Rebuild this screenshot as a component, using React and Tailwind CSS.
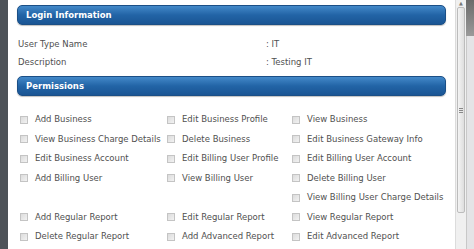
import React from 'react';

const permissions = [
  ['Add Business', 'Edit Business Profile', 'View Business'],
  ['View Business Charge Details', 'Delete Business', 'Edit Business Gateway Info'],
  ['Edit Business Account', 'Edit Billing User Profile', 'Edit Billing User Account'],
  ['Add Billing User', 'View Billing User', 'Delete Billing User'],
  [null, null, 'View Billing User Charge Details'],
  ['Add Regular Report', 'Edit Regular Report', 'View Regular Report'],
  ['Delete Regular Report', 'Add Advanced Report', 'Edit Advanced Report'],
];

const SectionBar = ({ title }) => (
  <div className="h-[20px] rounded-[5px] border border-[#1b4f86] bg-gradient-to-b from-[#4389c9] via-[#2264a6] to-[#1a5594] flex items-center pl-[8px] shadow-[0_1px_1px_rgba(0,0,0,0.25)]">
    <span className="text-white font-bold text-[8.5px]">{title}</span>
  </div>
);

const Check = ({ label }) => (
  <label className="flex items-center h-[19.5px] gap-[7px]">
    <span className="w-[8px] h-[8px] border border-[#c4c4c4] bg-gradient-to-br from-[#dcdcdc] to-[#f2f2f2] shrink-0" />
    <span>{label}</span>
  </label>
);

export default function App() {
  return (
    <div className="flex w-[474px] h-[249px] overflow-hidden bg-white text-[#505050] text-[8.5px]" style={{ fontFamily: '"DejaVu Sans", Verdana, sans-serif' }}>
      <div className="w-[8px] bg-[#4d5258]" />

      <div className="flex-1 pl-[9px] pr-[9px] pt-[5px]">
        <SectionBar title="Login Information" />

        <div className="mt-[10px] pl-[1px]">
          <div className="flex h-[18px] items-center">
            <span className="w-[248px]">User Type Name</span>
            <span>: IT</span>
          </div>
          <div className="flex h-[18px] items-center">
            <span className="w-[248px]">Description</span>
            <span>: Testing IT</span>
          </div>
        </div>

        <div className="mt-[5px]">
          <SectionBar title="Permissions" />
        </div>

        <div className="mt-[14px] grid grid-cols-[147px_125px_1fr] pl-[3px]">
          {permissions.flatMap((row, i) =>
            row.map((p, j) => (p ? <Check key={`${i}-${j}`} label={p} /> : <div key={`${i}-${j}`} className="h-[19.5px]" />))
          )}
        </div>
      </div>

      {/* scrollbar */}
      <div className="w-[11px] bg-[#f0f0f0] border-l border-[#dcdcdc] flex flex-col items-center">
        <div className="h-[6px] w-full flex items-center justify-center text-[#777] text-[5px] leading-none">▲</div>
        <div className="mt-[1px] w-[8px] h-[206px] rounded-[2px] border border-[#bcbcbc] bg-gradient-to-r from-[#f4f4f4] to-[#dedede] flex items-center justify-center">
          <div className="flex flex-col gap-[1px]">
            <div className="w-[4px] h-px bg-[#888]" />
            <div className="w-[4px] h-px bg-[#888]" />
            <div className="w-[4px] h-px bg-[#888]" />
          </div>
        </div>
      </div>

      <div className="w-[8px] flex flex-col">
        <div className="h-[36px] bg-gradient-to-b from-[#6b6b6b] to-[#9a9a9a]" />
        <div className="flex-1 bg-[#e4e4e6] border-l border-[#c8c8c8]" />
      </div>
    </div>
  );
}
